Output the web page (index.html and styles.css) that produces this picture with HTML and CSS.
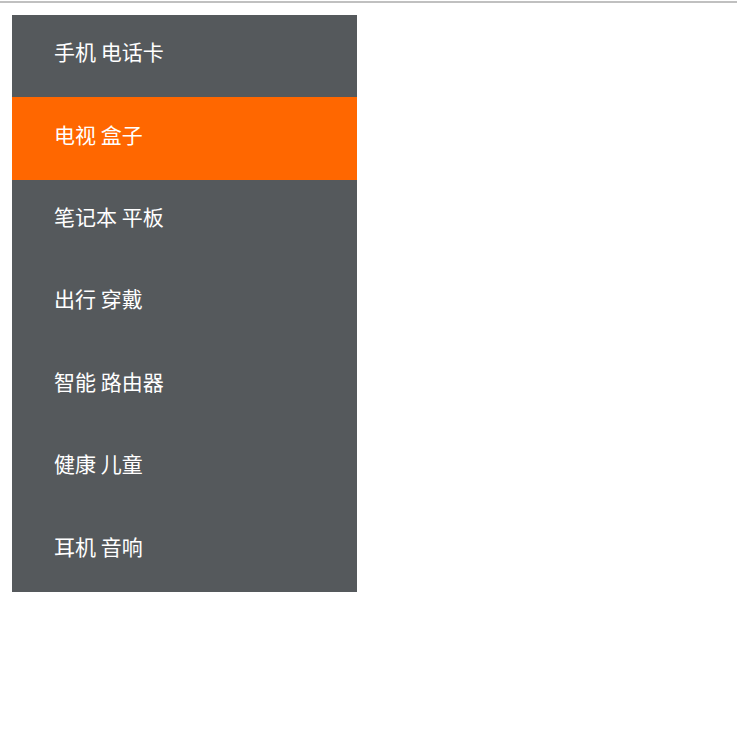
FILE: index.html
```html
<!DOCTYPE html>
<html>
<head>
<meta charset="utf-8">
<link rel="stylesheet" href="styles.css">
</head>
<body>
<div class="topline"></div>
<ul class="menu">
  <li class="item">手机 电话卡</li>
  <li class="item active">电视 盒子</li>
  <li class="item">笔记本 平板</li>
  <li class="item">出行 穿戴</li>
  <li class="item">智能 路由器</li>
  <li class="item">健康 儿童</li>
  <li class="item">耳机 音响</li>
</ul>
</body>
</html>
```
FILE: styles.css
```css
html, body {
  margin: 0;
  padding: 0;
  background: #fff;
}
.topline {
  margin-top: 1px;
  height: 2px;
  background: #c0c0c0;
}
.menu {
  list-style: none;
  margin: 12px 0 0 12px;
  padding: 0;
  width: 345px;
  background: #55595c;
  font-family: "Noto Sans CJK SC", "Noto Sans", sans-serif;
  font-size: 21px;
  color: #fff;
}
.item {
  height: 82.43px;
  display: flex;
  align-items: center;
  padding-left: 42px;
  padding-bottom: 10px;
  box-sizing: border-box;
}
.active {
  background: #ff6700;
}
```
